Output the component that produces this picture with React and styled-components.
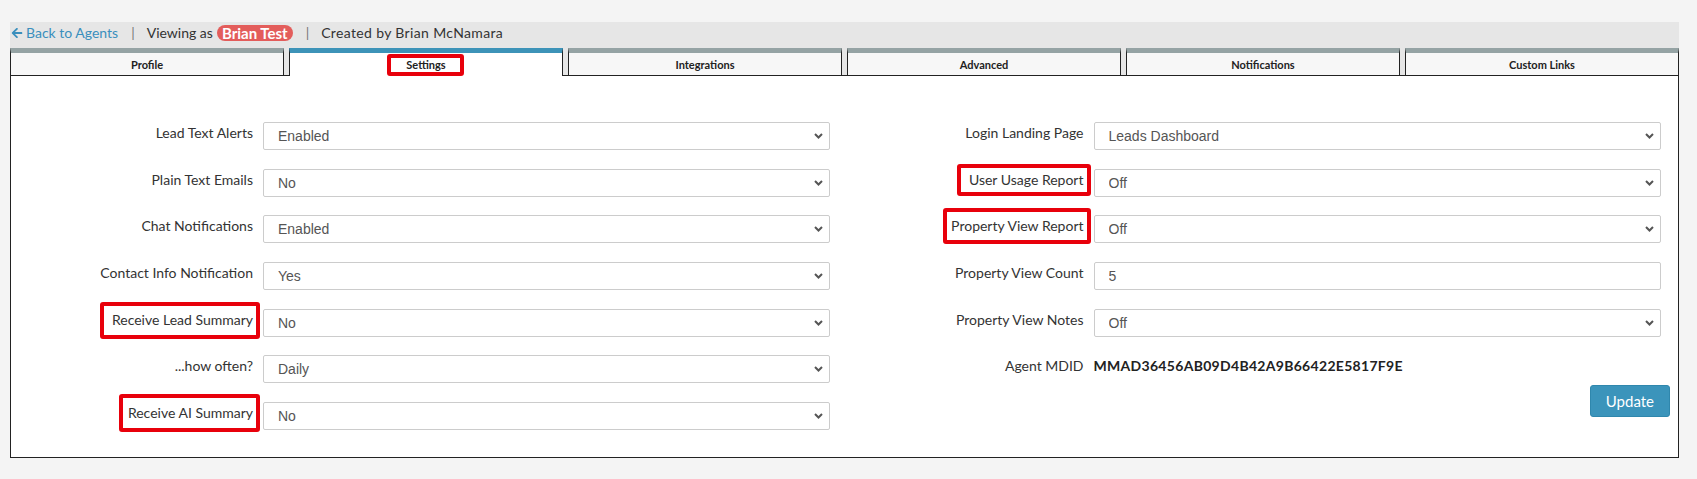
import React from "react";
import styled, { createGlobalStyle } from "styled-components";
import { FaArrowLeft } from "react-icons/fa";

const GlobalStyle = createGlobalStyle`
  html, body {
    margin: 0;
    padding: 0;
    background: #f4f4f4;
  }
  body {
    font-family: "Lato", "Liberation Sans", sans-serif;
    font-size: 14px;
    color: #333;
  }
`;

const leftFields = [
  { label: "Lead Text Alerts", value: "Enabled" },
  { label: "Plain Text Emails", value: "No" },
  { label: "Chat Notifications", value: "Enabled" },
  { label: "Contact Info Notification", value: "Yes" },
  { label: "Receive Lead Summary", value: "No", mark: [8, 7, 9, 12] },
  { label: "...how often?", value: "Daily" },
  { label: "Receive AI Summary", value: "No", mark: [9, 7, 9, 9] },
];

const rightFields = [
  { label: "Login Landing Page", value: "Leads Dashboard" },
  { label: "User Usage Report", value: "Off", mark: [6, 7, 6, 12] },
  { label: "Property View Report", value: "Off", mark: [8, 7, 8, 8] },
  { label: "Property View Count", value: "5", input: true },
  { label: "Property View Notes", value: "Off" },
  { label: "Agent MDID", value: "MMAD36456AB09D4B42A9B66422E5817F9E", text: true },
];

const tabs = ["Profile", "Settings", "Integrations", "Advanced", "Notifications", "Custom Links"];

function Chevron() {
  return (
    <Arrow width="9" height="6" viewBox="0 0 9 6">
      <polyline points="1,1 4.5,4.5 8,1" fill="none" stroke="#555" strokeWidth="2" />
    </Arrow>
  );
}

function Field({ field }) {
  const label = field.mark ? <Mark $box={field.mark}>{field.label}</Mark> : field.label;
  let control;
  if (field.text) {
    control = <Value>{field.value}</Value>;
  } else if (field.input) {
    control = <Input type="text" defaultValue={field.value} />;
  } else {
    control = (
      <SelectWrap>
        <Select defaultValue={field.value}>
          <option>{field.value}</option>
        </Select>
        <Chevron />
      </SelectWrap>
    );
  }
  return (
    <>
      <Label>{label}</Label>
      {control}
    </>
  );
}

function App() {
  return (
    <Page>
      <GlobalStyle />
      <TopBar>
        <Breadcrumb>
          <BackLink href="#">
            <FaArrowLeft size={12} />
            Back to Agents
          </BackLink>
          <Sep>|</Sep>
          Viewing as
          <Badge>Brian Test</Badge>
          <Sep>|</Sep>
          <Creator>Created by Brian McNamara</Creator>
        </Breadcrumb>
        <Tabs>
          {tabs.map((t) => (
            <Tab key={t} $active={t === "Settings"}>
              {t === "Settings" ? <Mark $box={[1, 18, 1, 19]}>{t}</Mark> : t}
            </Tab>
          ))}
        </Tabs>
      </TopBar>
      <Panel>
        <Columns>
          <Column>
            <FieldGrid $label={242} $right={14.5}>
              {leftFields.map((f) => (
                <Field key={f.label} field={f} />
              ))}
            </FieldGrid>
          </Column>
          <Column>
            <FieldGrid $label={239} $right={17}>
              {rightFields.map((f) => (
                <Field key={f.label} field={f} />
              ))}
            </FieldGrid>
            <ButtonRow>
              <Button>Update</Button>
            </ButtonRow>
          </Column>
        </Columns>
      </Panel>
    </Page>
  );
}

export default App;

const Page = styled.div`
  padding: 22px 18px 22px 10px;
`;

const TopBar = styled.div`
  background: #e6e6e6;
`;

const Breadcrumb = styled.div`
  display: flex;
  align-items: center;
  height: 26px;
  box-sizing: border-box;
  padding: 0 0 4px 1px;
  line-height: 20px;
  color: #333;
  white-space: nowrap;
`;

const BackLink = styled.a`
  display: inline-flex;
  align-items: center;
  gap: 3px;
  color: #3a8fbd;
  text-decoration: none;
`;

const Sep = styled.span`
  color: #777;
  padding: 0 12px 0 13px;
`;

const Creator = styled.span`
  letter-spacing: 0.35px;
`;

const Badge = styled.span`
  margin-left: 4px;
  padding: 0 5px;
  height: 16px;
  line-height: 16px;
  border-radius: 8px;
  background: #e35d5b;
  color: #fff;
  font-size: 15px;
  font-weight: 700;
`;

const Tabs = styled.div`
  display: flex;
  gap: 5px;
  align-items: flex-end;
  border-bottom: 1px solid #222;
`;

const Tab = styled.div`
  flex: 1;
  height: ${(p) => (p.$active ? 21 : 20)}px;
  margin-bottom: ${(p) => (p.$active ? -1 : 0)}px;
  padding-top: 2px;
  border-top: 5px solid ${(p) => (p.$active ? "#3d93b8" : "#95a3a4")};
  border-left: 1px solid #222;
  border-right: 1px solid #222;
  background: ${(p) => (p.$active ? "#fff" : "#f7f7f7")};
  text-align: center;
  font-size: 11px;
  font-weight: 700;
  line-height: 20px;
  color: #222;
`;

const Mark = styled.span`
  position: relative;
  display: inline-block;
  &::after {
    content: "";
    position: absolute;
    top: -${(p) => p.$box[0]}px;
    right: -${(p) => p.$box[1]}px;
    bottom: -${(p) => p.$box[2]}px;
    left: -${(p) => p.$box[3]}px;
    border: 4px solid #e8000b;
    border-radius: 3px;
    pointer-events: none;
  }
`;

const Panel = styled.div`
  background: #fff;
  border: 1px solid #222;
  border-top: none;
  padding: 46px 0 27px;
`;

const Columns = styled.div`
  display: grid;
  grid-template-columns: 1fr 1fr;
`;

const Column = styled.div`
  display: flex;
  flex-direction: column;
`;

const FieldGrid = styled.div`
  display: grid;
  grid-template-columns: ${(p) => p.$label}px 1fr;
  column-gap: 10px;
  row-gap: 18.67px;
  margin-right: ${(p) => p.$right}px;
`;

const Label = styled.div`
  text-align: right;
  padding-top: 1px;
  line-height: 20px;
  font-size: 14px;
  color: #333;
  white-space: nowrap;
`;

const Value = styled.div`
  padding-top: 1px;
  line-height: 20px;
  font-size: 14px;
  font-weight: 700;
  letter-spacing: 0.3px;
  color: #222;
`;

const SelectWrap = styled.div`
  position: relative;
`;

const Select = styled.select`
  appearance: none;
  display: block;
  width: 100%;
  height: 28px;
  box-sizing: border-box;
  margin: 0;
  padding: 0 30px 0 14px;
  border: 1px solid #ccc;
  border-radius: 2px;
  background: #fff;
  font-family: "Liberation Sans", Arial, sans-serif;
  font-size: 14px;
  color: #555;
  outline: none;
`;

const Input = styled.input`
  display: block;
  width: 100%;
  height: 28px;
  box-sizing: border-box;
  margin: 0;
  padding: 0 14px;
  border: 1px solid #ccc;
  border-radius: 2px;
  background: #fff;
  font-family: "Liberation Sans", Arial, sans-serif;
  font-size: 14px;
  color: #555;
  outline: none;
`;

const Arrow = styled.svg`
  position: absolute;
  right: 7px;
  top: 50%;
  margin-top: -3px;
  pointer-events: none;
`;

const ButtonRow = styled.div`
  display: flex;
  justify-content: flex-end;
  margin-top: 9px;
  padding-right: 8px;
`;

const Button = styled.button`
  height: 32px;
  padding: 0 15px;
  border: 1px solid #2f87ad;
  border-radius: 3px;
  background: #3b94bb;
  color: #fff;
  font-family: "Lato", "Liberation Sans", sans-serif;
  font-size: 15px;
`;
